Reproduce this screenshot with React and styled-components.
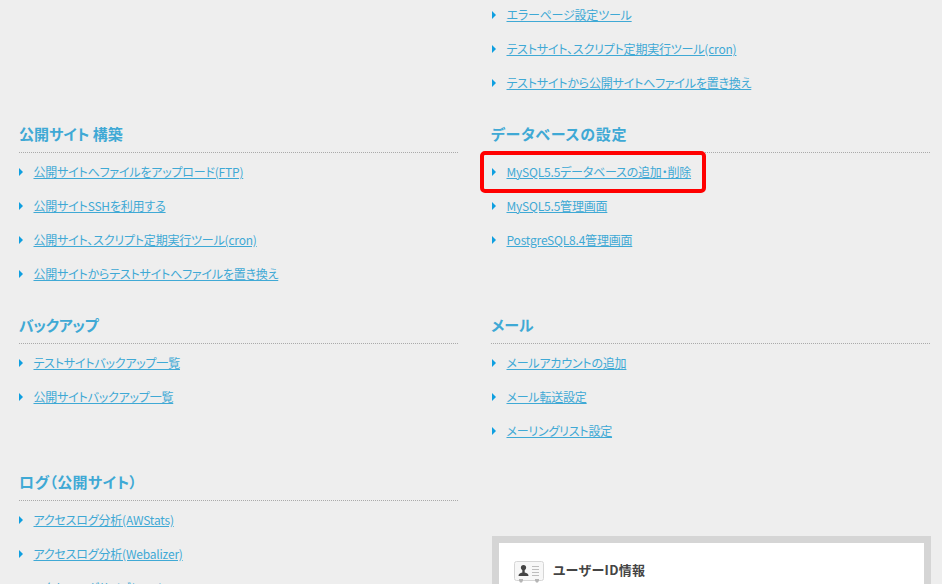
import React from "react"
import styled, { createGlobalStyle } from "styled-components"

const GlobalStyle = createGlobalStyle`
  html, body {
    margin: 0;
    padding: 0;
    height: 584px;
    overflow: hidden;
    background: #eeeeee;
  }
`

const topLinks = [
  "エラーページ設定ツール",
  "テストサイト、スクリプト定期実行ツール(cron)",
  "テストサイトから公開サイトへファイルを置き換え",
]

const publicSite = {
  title: "公開サイト 構築",
  links: [
    "公開サイトへファイルをアップロード(FTP)",
    "公開サイトSSHを利用する",
    "公開サイト、スクリプト定期実行ツール(cron)",
    "公開サイトからテストサイトへファイルを置き換え",
  ],
}

const database = {
  title: "データベースの設定",
  spacing: 0.7,
  links: ["MySQL5.5データベースの追加・削除", "MySQL5.5管理画面", "PostgreSQL8.4管理画面"],
  marked: 0,
}

const backup = {
  title: "バックアップ",
  spacing: -0.4,
  links: ["テストサイトバックアップ一覧", "公開サイトバックアップ一覧"],
}

const mail = {
  title: "メール",
  links: ["メールアカウントの追加", "メール転送設定", "メーリングリスト設定"],
}

const logs = {
  title: "ログ（公開サイト）",
  spacing: 0.4,
  links: ["アクセスログ分析(AWStats)", "アクセスログ分析(Webalizer)", "アクセスログサイズ(cron)"],
}

export default function App() {
  return (
    <Page>
      <GlobalStyle />
      <TopRow>
        <div />
        <TopList $right>
          {topLinks.map(link => (
            <LinkRow key={link}>
              <TextLink href="#">{link}</TextLink>
            </LinkRow>
          ))}
        </TopList>
      </TopRow>
      <Section section={publicSite} />
      <Section section={database} right />
      <Section section={backup} />
      <Section section={mail} right />
      <Section section={logs} />
      <InfoBox>
        <InfoHead>
          <CardIcon />
          <InfoTitle>ユーザーID情報</InfoTitle>
        </InfoHead>
      </InfoBox>
    </Page>
  )
}

function Section({ section, right }) {
  return (
    <SectionWrap>
      <SectionTitle $spacing={section.spacing}>{section.title}</SectionTitle>
      <LinkList $right={right}>
        {section.links.map((link, i) => (
          <LinkRow key={link}>
            <TextLink href="#">{link}</TextLink>
            {section.marked === i && <Marker />}
          </LinkRow>
        ))}
      </LinkList>
    </SectionWrap>
  )
}

function CardIcon() {
  return (
    <svg width="30" height="22" viewBox="0 0 30 22">
      <rect x="0.5" y="0.5" width="29" height="19" rx="2" fill="#f7f7f7" stroke="#d6d6d6" />
      <circle cx="9.5" cy="6.5" r="2.6" fill="#444" />
      <rect x="8.3" y="8" width="2.4" height="4" fill="#444" />
      <path d="M4.5 15 Q4.5 11.5 9.5 11.5 Q14.5 11.5 14.5 15 Z" fill="#444" />
      <path d="M18 5.5h7M18 8.5h7M18 11.5h7M18 14.5h7" stroke="#bdbdbd" strokeWidth="1" />
      <path d="M5 18h4v1.5l-1 2h-2l-1-2zM21 18h4v1.5l-1 2h-2l-1-2z" fill="#b5b5b5" />
    </svg>
  )
}

const Page = styled.div`
  display: grid;
  grid-template-columns: 439px 439px;
  grid-auto-rows: min-content;
  column-gap: 33px;
  padding-left: 19px;
  height: 584px;
  overflow: hidden;
  font-family: "Noto Sans CJK JP", "Liberation Sans", sans-serif;
  font-size: 12px;
  font-feature-settings: "palt";
`

const TopRow = styled.div`
  grid-column: 1 / 3;
  display: grid;
  grid-template-columns: 439px 439px;
  column-gap: 33px;
  height: 124px;
`

const SectionWrap = styled.section`
  padding-bottom: 24px;
`

const SectionTitle = styled.h2`
  margin: 0;
  height: 28px;
  line-height: 19px;
  font-size: 15px;
  font-weight: 700;
  letter-spacing: ${props => props.$spacing || 0}px;
  color: #3fa9d5;
  border-bottom: 1px dotted #aaaaaa;
`

const LinkList = styled.ul`
  margin: ${props => (props.$right ? "0 0 0 1px" : "0")};
  padding: 2px 0 0;
  list-style: none;
`

const TopList = styled(LinkList)`
  margin-top: -4px;
`

const LinkRow = styled.li`
  position: relative;
  height: 34px;
  line-height: 33px;
  padding-left: 14.5px;

  &::before {
    content: "";
    position: absolute;
    left: 0;
    top: 13px;
    border-style: solid;
    border-width: 4px 0 4px 4px;
    border-color: transparent transparent transparent #0f9fe0;
  }
`

const TextLink = styled.a`
  color: #3fa9d5;
  letter-spacing: -0.2px;
  text-decoration: underline;
`

const Marker = styled.span`
  position: absolute;
  left: -12px;
  top: -4px;
  box-sizing: border-box;
  width: 226px;
  height: 42px;
  border: 4px solid #ff0000;
  border-radius: 5px;
`

const InfoBox = styled.div`
  margin: 64px -1px 0 1px;
  height: 200px;
  border: 7px solid #d5d5d5;
  background: #ffffff;
  padding: 18px 15px;
`

const InfoHead = styled.div`
  display: flex;
  align-items: flex-start;
  gap: 9px;
`

const InfoTitle = styled.h3`
  margin: 0;
  font-size: 13px;
  line-height: 18px;
  font-weight: 700;
  letter-spacing: 0.3px;
  color: #444444;
`
